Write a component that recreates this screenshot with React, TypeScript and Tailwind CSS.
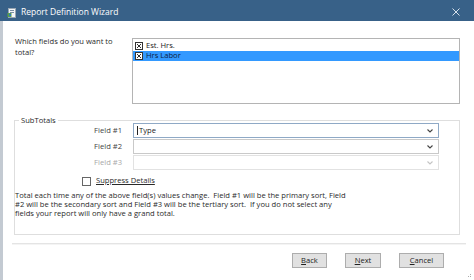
const CheckX = () => (
  <svg width="8" height="8" viewBox="0 0 8 8" className="shrink-0">
    <rect x="0.5" y="0.5" width="7" height="7" fill="#fff" stroke="#333" />
    <path d="M2 2 L6 6 M6 2 L2 6" stroke="#333" strokeWidth="1" />
  </svg>
);

const Chevron = ({ color }: { color: string }) => (
  <svg width="6" height="4" viewBox="0 0 6 4">
    <path d="M0.5 0.5 L3 3 L5.5 0.5" fill="none" stroke={color} strokeWidth="1.1" />
  </svg>
);

const Combo = ({
  value,
  disabled,
  focused,
}: {
  value?: string;
  disabled?: boolean;
  focused?: boolean;
}) => (
  <div
    className={`h-[15px] w-[306px] flex items-center justify-between pl-[3px] pr-[5px] bg-white border ${
      focused ? "border-[#8fa9c6]" : disabled ? "border-[#e2e2e2]" : "border-[#c9c9c9]"
    }`}
  >
    <span className="flex items-center text-[#222]">
      {focused && <span className="w-px h-[9px] bg-[#222] mr-px" />}
      {value}
    </span>
    <Chevron color={disabled ? "#c4c4c4" : "#444"} />
  </div>
);

const Btn = ({ k, rest, w }: { k: string; rest: string; w: string }) => (
  <button
    className={`h-[15px] ${w} bg-[#e1e1e1] border border-[#adadad] text-[#222] leading-none flex items-center justify-center`}
  >
    <span>
      <span className="underline">{k}</span>
      {rest}
    </span>
  </button>
);

export default function App() {
  return (
    <div
      className="w-[474px] h-[280px] bg-white flex flex-col text-[7.6px] text-[#2a2a2a] overflow-hidden"
      style={{ fontFamily: '"Open Sans", "Noto Sans", sans-serif' }}
    >
      <div className="h-[21px] bg-[#386188] flex items-center pl-[7px] pr-[14px] pt-[4px] shrink-0">
        <svg width="10" height="10" viewBox="0 0 10 10" className="mr-[4px]">
          <rect x="1.5" y="0.5" width="7" height="9" fill="#f4f6f8" stroke="#9aa7b3" />
          <rect x="3" y="2" width="4" height="1" fill="#7a8fa3" />
          <rect x="3" y="4" width="4" height="1" fill="#7a8fa3" />
          <rect x="0.5" y="5" width="4" height="4" fill="#5aa04a" />
          <rect x="2" y="6" width="2" height="2" fill="#2f78c4" />
        </svg>
        <span className="text-white text-[8.5px] leading-none">Report Definition Wizard</span>
        <span className="ml-auto -mt-[2px]">
          <svg width="8" height="8" viewBox="0 0 8 8">
            <path d="M0.5 0.5 L7.5 7.5 M7.5 0.5 L0.5 7.5" stroke="#d6e0ea" strokeWidth="1" />
          </svg>
        </span>
      </div>

      <div className="flex-1 flex flex-col border-l-[3px] border-[#c3cad2]">
        <div className="flex items-start pt-[15px] pl-[12px]">
          <div className="w-[117px] leading-[11px]">
            Which fields do you want to
            <br />
            total?
          </div>
          <div className="mt-[2px] w-[328px] h-[66px] border border-[#b4b4b4] pt-[2px] flex flex-col">
            <div className="h-[10px] flex items-center gap-[3px] pl-[2px] text-[#222]">
              <CheckX />
              <span>Est. Hrs.</span>
            </div>
            <div className="h-[10px] flex items-center gap-[3px] pl-[2px] bg-[#3399ff] text-[#0c1e3c]">
              <CheckX />
              <span>Hrs Labor</span>
            </div>
          </div>
        </div>

        <fieldset className="ml-[11px] mt-[12px] w-[446px] h-[119px] border border-[#dedede] pl-0">
          <legend className="ml-[4px] px-[2px] leading-[8px]">SubTotals</legend>
          <div className="flex flex-col gap-[1px] -mt-[1px]">
            {[
              { l: "Field #1", v: "Type", f: true },
              { l: "Field #2" },
              { l: "Field #3", d: true },
            ].map((r) => (
              <div key={r.l} className="flex items-center gap-[11px]">
                <span className={`w-[107px] text-right ${r.d ? "text-[#a8a8a8]" : "text-[#444]"}`}>
                  {r.l}
                </span>
                <Combo value={r.v} focused={r.f} disabled={r.d} />
              </div>
            ))}
          </div>
          <div className="flex items-center gap-[5px] ml-[67px] mt-[6px] h-[10px]">
            <span className="w-[9px] h-[9px] border border-[#666] bg-white" />
            <span className="underline">Suppress Details</span>
          </div>
          <p className="mt-[5px] leading-[9px] whitespace-pre">
            {"Total each time any of the above field(s) values change.  Field #1 will be the primary sort, Field\n#2 will be the secondary sort and Field #3 will be the tertiary sort.  If you do not select any\nfields your report will only have a grand total."}
          </p>
        </fieldset>

        <div className="ml-[9px] mt-[8px] w-[454px] h-[2px] bg-[#e4e4e4] border-b border-[#f4f4f4]" />

        <div className="flex justify-end gap-[18px] mt-[8px] mr-[30px]">
          <Btn k="B" rest="ack" w="w-[35px]" />
          <Btn k="N" rest="ext" w="w-[36px]" />
          <Btn k="C" rest="ancel" w="w-[45px]" />
        </div>

        <div className="mt-auto self-end mr-[3px] mb-[3px] grid grid-cols-3 gap-[1px]">
          <span />
          <span />
          <span className="w-px h-px bg-[#aaa]" />
          <span />
          <span className="w-px h-px bg-[#aaa]" />
          <span className="w-px h-px bg-[#aaa]" />
        </div>
      </div>
    </div>
  );
}
